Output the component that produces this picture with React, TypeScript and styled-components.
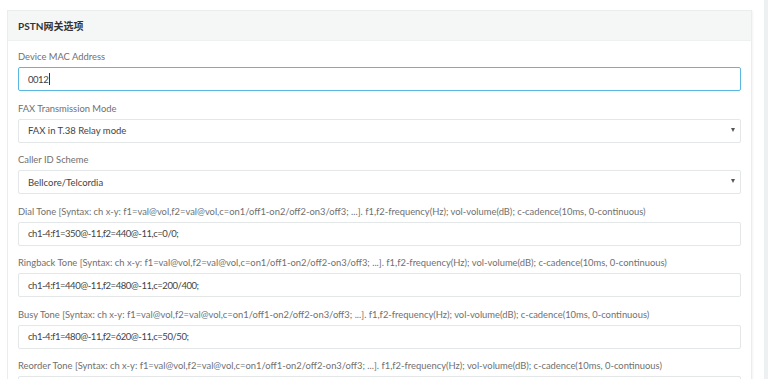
import styled, { createGlobalStyle } from 'styled-components'

const GlobalStyle = createGlobalStyle`
  html, body {
    margin: 0;
    padding: 0;
    background: #ffffff;
    overflow: hidden;
  }
  body {
    font-family: Lato, "Noto Sans CJK SC", sans-serif;
  }
`

const Page = styled.div`
  display: flex;
  height: 379px;
  width: 768px;
  overflow: hidden;
`

const Content = styled.div`
  flex: 1;
  padding: 10px 12px 0 7px;
  min-width: 0;
`

const Track = styled.div`
  width: 4px;
  background: #eef1f2;
`

const Panel = styled.section`
  border: 1px solid #e9edee;
  box-shadow: 1px 1px 2px rgba(0, 0, 0, 0.05);
  background: #fff;
`

const PanelHeader = styled.header`
  height: 29px;
  display: flex;
  align-items: center;
  padding: 0 10px;
  background: #f5f7f7;
  border-bottom: 1px solid #eef1f1;
  font-size: 10px;
  font-weight: 700;
  color: #333;
`

const PanelBody = styled.div`
  padding: 9px 10px 0 10px;
`

const Group = styled.div`
  margin-bottom: 10.5px;
`

const Label = styled.label`
  display: block;
  font-size: 9.4px;
  line-height: 14px;
  margin-bottom: 3px;
  color: #707070;
  white-space: nowrap;
`

const Field = styled.div<{ $focused?: boolean; $numeric?: boolean }>`
  position: relative;
  height: 24px;
  box-sizing: border-box;
  border: 1px solid ${(p) => (p.$focused ? '#5ab7e0' : '#e3e7e8')};
  border-radius: 2px;
  display: flex;
  align-items: center;
  padding: 0 9px;
  font-size: 9.5px;
  letter-spacing: ${(p) => (p.$numeric ? '-0.45px' : '0')};
  color: #444;
  background: #fff;
  white-space: nowrap;
`

const Caret = styled.span`
  display: inline-block;
  width: 1px;
  height: 12px;
  background: #333;
  margin-left: 1px;
`

const Arrow = styled.span`
  position: absolute;
  right: 5px;
  top: 8px;
  width: 0;
  height: 0;
  border-left: 2.5px solid transparent;
  border-right: 2.5px solid transparent;
  border-top: 4px solid #555;
`

const syntax =
  ' [Syntax: ch x-y: f1=val@vol,f2=val@vol,c=on1/off1-on2/off2-on3/off3; ...]. f1,f2-frequency(Hz); vol-volume(dB); c-cadence(10ms, 0-continuous)'

const tones = [
  { name: 'Dial Tone', value: 'ch1-4:f1=350@-11,f2=440@-11,c=0/0;' },
  { name: 'Ringback Tone', value: 'ch1-4:f1=440@-11,f2=480@-11,c=200/400;' },
  { name: 'Busy Tone', value: 'ch1-4:f1=480@-11,f2=620@-11,c=50/50;' },
  { name: 'Reorder Tone', value: 'ch1-4:f1=480@-11,f2=620@-11,c=25/25;' },
]

export default function App() {
  return (
    <>
      <GlobalStyle />
      <Page>
        <Content>
          <Panel>
            <PanelHeader>PSTN网关选项</PanelHeader>
            <PanelBody>
              <Group>
                <Label>Device MAC Address</Label>
                <Field $focused $numeric>
                  0012
                  <Caret />
                </Field>
              </Group>
              <Group>
                <Label>FAX Transmission Mode</Label>
                <Field>
                  FAX in T.38 Relay mode
                  <Arrow />
                </Field>
              </Group>
              <Group>
                <Label>Caller ID Scheme</Label>
                <Field>
                  Bellcore/Telcordia
                  <Arrow />
                </Field>
              </Group>
              {tones.map((t) => (
                <Group key={t.name}>
                  <Label>
                    {t.name}
                    {syntax}
                  </Label>
                  <Field $numeric>{t.value}</Field>
                </Group>
              ))}
            </PanelBody>
          </Panel>
        </Content>
        <Track />
      </Page>
    </>
  )
}
